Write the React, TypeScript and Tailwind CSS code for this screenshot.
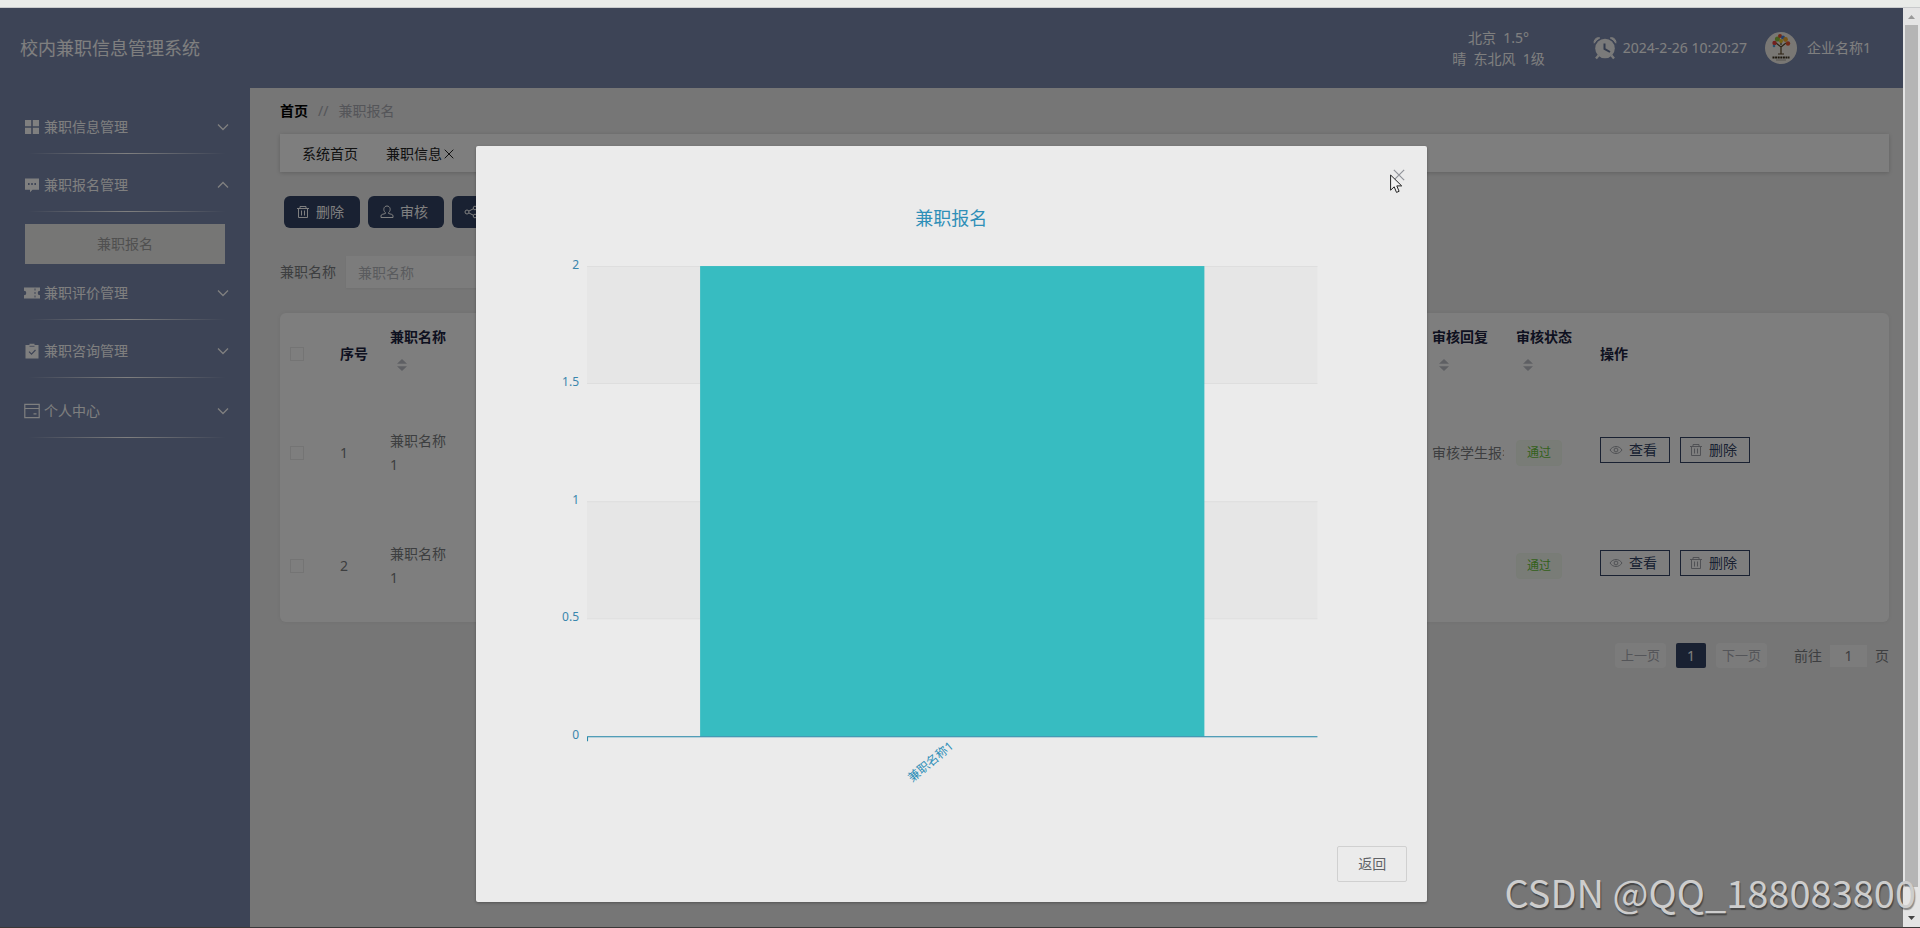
import type { ReactNode } from 'react';

type IconProps = { className?: string };

const TrashIcon = ({ className }: IconProps) => (
  <svg viewBox="0 0 14 14" className={className} fill="none" stroke="currentColor" strokeWidth="1">
    <path d="M1 3.5h12M4 3.2V1.5h6v1.7M2.5 3.5v9h9v-9M5.5 5.5v5M8.5 5.5v5" />
  </svg>
);

const StampIcon = ({ className }: IconProps) => (
  <svg viewBox="0 0 14 14" className={className} fill="none" stroke="currentColor" strokeWidth="1">
    <path d="M5.4 7.6C3.9 6.4 3.7 4.7 3.9 3.6 4.2 2 5.5 1 7 1s2.8 1 3.1 2.6c.2 1.1 0 2.8-1.5 4v.9l3.2.9c.8.2 1.2.8 1.2 1.6v1.5H1V11c0-.8.4-1.4 1.2-1.6l3.2-.9z" />
  </svg>
);

const ShareIcon = ({ className }: IconProps) => (
  <svg viewBox="0 0 14 14" className={className} fill="none" stroke="currentColor" strokeWidth="1">
    <circle cx="3" cy="7" r="2" />
    <circle cx="11" cy="3" r="1.8" />
    <circle cx="11" cy="11" r="1.8" />
    <path d="M4.8 6.1l4.5-2.3M4.8 7.9l4.5 2.3" />
  </svg>
);

const EyeIcon = ({ className }: IconProps) => (
  <svg viewBox="0 0 14 14" className={className} fill="none" stroke="currentColor" strokeWidth="1">
    <path d="M1 7c1.5-2.3 3.6-3.5 6-3.500S11.5 4.7 13 7c-1.5 2.3-3.6 3.5-6 3.500S2.5 9.3 1 7z" />
    <circle cx="7" cy="7" r="1.9" />
  </svg>
);

const CloseIcon = ({ className }: IconProps) => (
  <svg viewBox="0 0 10 10" className={className} fill="none" stroke="currentColor" strokeWidth="1">
    <path d="M.7.7l8.6 8.6M9.3.7L.7 9.3" />
  </svg>
);

const Chevron = ({ className }: IconProps) => (
  <svg viewBox="0 0 12 8" className={className} fill="none" stroke="currentColor" strokeWidth="1.3">
    <path d="M1 1.5l5 5 5-5" />
  </svg>
);

const GridIcon = () => (
  <svg viewBox="0 0 16 16" className="size-4" fill="currentColor">
    <path d="M1 1h6.2v6.2H1zM8.8 1H15v6.2H8.8zM1 8.8h6.2V15H1zM8.8 8.8H15V15H8.8z" />
  </svg>
);

const CommentIcon = () => (
  <svg viewBox="0 0 16 16" className="size-4" fill="currentColor" fillRule="evenodd">
    <path d="M1 1.5h14v11.3H8.5L6 15.2v-2.4H1zM4 6v2h1.600V6zm3.200 0v2h1.600V6zm3.200 0v2H12V6z" />
  </svg>
);

const TicketIcon = () => (
  <svg viewBox="0 0 16 16" className="size-4" fill="currentColor" fillRule="evenodd">
    <path d="M0 2.5h16v3.2a2.3 2.3 0 000 4.6v3.2H0v-3.200a2.3 2.3 0 000-4.600zM10.500 3.500v2h1v-2zm0 3.500v2h1V7zm0 3.500v2h1v-2z" />
  </svg>
);

const ClaimIcon = () => (
  <svg viewBox="0 0 16 16" className="size-4">
    <path d="M1.5 2h4V.8h5V2h4v13.500h-13z" fill="currentColor" />
    <path d="M5 8.700l2.500 2.500 4-4.200" fill="none" stroke="#7a88ac" strokeWidth="1.2" />
    <path d="M5.500 3.300h5" stroke="#7a88ac" strokeWidth=".8" />
  </svg>
);

const CardIcon = () => (
  <svg viewBox="0 0 16 16" className="size-4" fill="none" stroke="currentColor" strokeWidth="1.2">
    <path d="M.8 1.3h14.4v13.4H.8zM.8 5.5h14.4M9.5 10.8h3" />
  </svg>
);

const ClockIcon = () => (
  <svg viewBox="0 0 24 24" className="size-6" fill="#f4f4f4">
    <circle cx="12" cy="12.500" r="9.800" />
    <path d="M1.200 7.200A13 13 0 016.800 1.900L5 1.700A4.500 4.500 0 001.200 7.200zM22.800 7.200A13 13 0 0017.200 1.900l1.800-.2a4.500 4.500 0 013.800 5.500z" stroke="#f4f4f4" />
    <path d="M5.500 19.500L3 22.500M18.500 19.500l2.500 3" stroke="#f4f4f4" strokeWidth="2.400" />
    <path d="M11.500 7.500v5.300l5.500 3.200" fill="none" stroke="#66769a" strokeWidth="2" />
  </svg>
);

const Avatar = () => (
  <svg viewBox="0 0 32 32" className="size-8">
    <circle cx="16" cy="16" r="16" fill="#f2efe9" />
    <path d="M16 22v-7l-5-4M16 15l5-4M16 13V8M13 22h6" fill="none" stroke="#5a4526" strokeWidth="1.2" />
    <circle cx="9.500" cy="11" r="2.200" fill="#e8413c" />
    <circle cx="12.500" cy="7" r="2.600" fill="#8dbf3f" />
    <circle cx="15" cy="4" r="2" fill="#e5532f" />
    <circle cx="18" cy="5.500" r="2" fill="#4b7fd1" />
    <circle cx="20.500" cy="7.500" r="2.400" fill="#f0a92c" />
    <circle cx="16" cy="9" r="2" fill="#e9c52e" />
    <circle cx="23" cy="11.500" r="2.200" fill="#e5532f" />
    <circle cx="9" cy="14" r="1.300" fill="#4f9fd8" />
    <path d="M7.500 25.500h17" stroke="#3a2e1c" strokeWidth="2" strokeDasharray="2 .6" />
    <path d="M11 28h10" stroke="#a09a90" strokeWidth=".8" />
  </svg>
);

const SortCaret = () => (
  <svg viewBox="0 0 12 12" className="ml-1.5 size-3" fill="#bcbfc6">
    <path d="M6 0l5 4.8H1zM6 12l5-4.800H1z" />
  </svg>
);

type MenuItemProps = { icon: ReactNode; label: string; open?: boolean };

function MenuItem({ icon, label, open }: MenuItemProps) {
  return (
    <button
      type="button"
      className="relative flex h-[58px] w-full items-center gap-1 pr-[21px] pl-6 text-sm text-white"
    >
      {icon}
      {label}
      <Chevron className={open ? 'ml-auto h-2 w-3 rotate-180' : 'ml-auto h-2 w-3'} />
      <span className="absolute right-6 bottom-0.5 left-7 h-px bg-linear-to-r from-transparent via-white to-transparent" />
    </button>
  );
}

function Sidebar() {
  return (
    <nav className="w-[250px] shrink-0 bg-[#7a88ac] pt-2.5">
      <MenuItem icon={<GridIcon />} label="兼职信息管理" />
      <MenuItem icon={<CommentIcon />} label="兼职报名管理" open />
      <a href="#signup" className="mx-[25px] mt-2.5 flex h-10 items-center justify-center bg-[#ececea] text-sm text-[#a0a0a0]">
        兼职报名
      </a>
      <MenuItem icon={<TicketIcon />} label="兼职评价管理" />
      <MenuItem icon={<ClaimIcon />} label="兼职咨询管理" />
      <div className="pt-0.5">
        <MenuItem icon={<CardIcon />} label="个人中心" />
      </div>
    </nav>
  );
}

function Header() {
  return (
    <header className="flex h-20 shrink-0 items-center bg-[#7a88ac] pr-8 pl-5 text-sm text-white">
      <h1 className="text-lg">校内兼职信息管理系统</h1>
      <div className="mr-12 ml-auto text-center leading-[21px] whitespace-pre">
        <p>北京{'  '}1.5°</p>
        <p>晴{'  '}东北风{'  '}1级</p>
      </div>
      <ClockIcon />
      <span className="mr-[18px] ml-1.5">2024-2-26 10:20:27</span>
      <Avatar />
      <span className="ml-2.5">企业名称1</span>
    </header>
  );
}

type ToolButtonProps = { icon: ReactNode; label: string };

const ToolButton = ({ icon, label }: ToolButtonProps) => (
  <button type="button" className="flex h-8 w-[76px] items-center gap-1.5 rounded-md bg-[#324264] pl-3 text-sm text-white">
    {icon}
    {label}
  </button>
);

const RowButton = ({ icon, label }: ToolButtonProps) => (
  <button type="button" className="flex h-[26px] w-[70px] items-center gap-1.5 border border-[#324264] pl-2 text-sm text-[#324264]">
    <span className="text-[#a0a3aa]">{icon}</span>
    {label}
  </button>
);

const rows = [
  { id: 1, name: '兼职名称1', reply: '审核学生报名', status: '通过' },
  { id: 2, name: '兼职名称1', reply: '', status: '通过' },
];

const SortableTh = ({ label }: { label: string }) => (
  <th className="pb-3.5 pl-2.5">
    <span className="mb-2.5 block leading-6">{label}</span>
    <SortCaret />
  </th>
);

function SignupTable() {
  return (
    <table className="mt-[25px] w-full table-fixed rounded-md bg-[#fdfdfd] text-left text-sm text-[#7a7c80] shadow-[0_0_4px_rgba(0,0,0,0.06)]">
      <colgroup>
        <col className="w-[50px]" />
        <col className="w-[50px]" />
        <col className="w-[84px]" />
        <col />
        <col className="w-[84px]" />
        <col className="w-[84px]" />
        <col className="w-[299px]" />
      </colgroup>
      <thead>
        <tr className="h-[83px] text-[#1c2340]">
          <th className="pb-0.5 pl-2.5">
            <input type="checkbox" aria-label="全选" className="block size-3.5 appearance-none border border-[#e8e8e8]" />
          </th>
          <th className="pb-0.5 pl-2.5">序号</th>
          <SortableTh label="兼职名称" />
          <th />
          <SortableTh label="审核回复" />
          <SortableTh label="审核状态" />
          <th className="pb-0.5 pl-2.5">操作</th>
        </tr>
      </thead>
      <tbody>
        {rows.map((row) => (
          <tr key={row.id} className="h-[113px]">
            <td className="pl-2.5">
              <input type="checkbox" aria-label={`选择${row.id}`} className="block size-3.5 appearance-none border border-[#e8e8e8]" />
            </td>
            <td className="pl-2.5">{row.id}</td>
            <td className="pr-4 pl-2.5 leading-6 break-all">{row.name}</td>
            <td />
            <td className="pr-0.5 pl-2.5">
              <div className="overflow-hidden whitespace-nowrap">{row.reply}</div>
            </td>
            <td className="pl-2.5">
              <span className="inline-block rounded-sm border border-[#f1f8ec] bg-[#f3f9ef] px-2.5 text-xs leading-6 text-[#67c23a]">{row.status}</span>
            </td>
            <td className="pb-1.5 pl-2.5">
              <div className="flex gap-2.5">
                <RowButton icon={<EyeIcon className="size-3.5" />} label="查看" />
                <RowButton icon={<TrashIcon className="size-3.5" />} label="删除" />
              </div>
            </td>
          </tr>
        ))}
      </tbody>
    </table>
  );
}

function Pagination() {
  return (
    <div className="mt-[21px] flex items-center justify-end text-sm text-[#7a7c80]">
      <button type="button" className="mr-2.5 h-[25px] rounded-sm bg-[#f7f7f7] px-1.5 text-[13px] text-[#a8abb2]">上一页</button>
      <button type="button" className="mr-2.5 h-[25px] w-[30px] rounded-xs bg-[#324264] text-white">1</button>
      <button type="button" className="h-[25px] rounded-sm bg-[#f7f7f7] px-1.5 text-[13px] text-[#a8abb2]">下一页</button>
      <label className="ml-[27px] flex items-center gap-2">
        前往
        <input defaultValue="1" className="h-[22px] w-[37px] bg-[#f9f9f9] text-center" />
        页
      </label>
    </div>
  );
}

function Content() {
  return (
    <main className="min-w-0 flex-1 bg-[#ececec] pr-3.5 pl-[30px]">
      <div className="flex h-[46px] items-center gap-2.5 text-sm text-[#a8abb2]">
        <a href="#home" className="font-bold text-black">首页</a>
        <span>//</span>
        <span>兼职报名</span>
      </div>
      <div className="flex h-[38px] items-center gap-7 bg-[#fdfdfd] pt-0.5 pl-[22px] text-sm text-[#222222] shadow-[0_1px_4px_rgba(0,0,0,0.18)]">
        <a href="#home">系统首页</a>
        <a href="#jobs" className="flex items-center gap-0.5">
          兼职信息
          <CloseIcon className="size-2.5" />
        </a>
      </div>
      <div className="mt-6 flex gap-2 pl-1">
        <ToolButton icon={<TrashIcon className="size-3.5" />} label="删除" />
        <ToolButton icon={<StampIcon className="size-3.5" />} label="审核" />
        <ToolButton icon={<ShareIcon className="size-3.5" />} label="" />
      </div>
      <label className="mt-7 flex items-center gap-2.5 text-sm text-[#7a7c80]">
        兼职名称
        <input placeholder="兼职名称" className="h-8 w-[200px] bg-[#f9f9f9] px-3 shadow-xs placeholder:text-[#b4b7bc]" />
      </label>
      <SignupTable />
      <Pagination />
    </main>
  );
}

const ticks = [
  { label: '2', y: 120 },
  { label: '1.5', y: 237 },
  { label: '1', y: 355 },
  { label: '0.5', y: 472 },
  { label: '0', y: 590 },
];

function SignupChart() {
  return (
    <svg viewBox="0 0 951 690" className="block w-full">
      <text x="475" y="79" fontSize="18" fill="#2f8fb8" textAnchor="middle">兼职报名</text>
      <path d="M111 120h730v117H111zM111 355h730v117H111z" fill="#e6e6e6" />
      {ticks.slice(0, 4).map((tick) => (
        <path key={tick.label} d={`M111 ${tick.y + 0.5}h730`} stroke="#dedede" />
      ))}
      <rect x="224" y="120" width="504" height="470" fill="#37bcc1" />
      <path d="M111.5 595v-4.500H841" fill="none" stroke="#1f84a6" />
      {ticks.map((tick) => (
        <text key={tick.label} x="103" y={tick.y + 3} fontSize="12" fill="#3a86ad" textAnchor="end">{tick.label}</text>
      ))}
      <text fontSize="12" fill="#2f8fb8" textAnchor="end" transform="translate(478 601) rotate(-40)">兼职名称1</text>
    </svg>
  );
}

function ChartDialog() {
  return (
    <div className="absolute inset-0 flex items-start justify-center bg-black/50">
      <div role="dialog" aria-label="兼职报名" className="relative mt-[138px] w-1/2 rounded-xs bg-[#ebebeb] shadow-[0_1px_3px_rgba(0,0,0,0.3)]">
        <button type="button" aria-label="关闭" className="absolute top-[23px] right-[22px] text-[#909399]">
          <CloseIcon className="size-3" />
        </button>
        <svg viewBox="0 0 13 20" className="absolute top-7 right-6 h-5 w-[13px]">
          <path d="M.6 1v15.200l3.600-3.400 2.300 5.600 2.600-1.100-2.300-5.400h4.900z" fill="#f4f4f4" stroke="#222222" />
        </svg>
        <SignupChart />
        <div className="flex justify-end px-5 pt-2.5 pb-5">
          <button type="button" className="h-9 w-[70px] rounded-xs border border-[#d0d0d0] text-sm text-[#606266]">返回</button>
        </div>
      </div>
    </div>
  );
}

function ScrollBar() {
  return (
    <div className="flex w-[17px] shrink-0 flex-col items-center bg-[#e4e4e4]">
      <svg viewBox="0 0 17 17" className="size-[17px]" fill="#999999">
        <path d="M5 11l3.500-4 3.500 4z" />
      </svg>
      <div className="w-[13px] flex-1 bg-[#b5b5b5]" />
      <svg viewBox="0 0 17 17" className="mt-[23px] size-[17px]" fill="#444444">
        <path d="M5 6l3.500 4L12 6z" />
      </svg>
    </div>
  );
}

export default function App() {
  return (
    <div className="relative flex h-screen flex-col overflow-hidden bg-[#e9ebe8] font-['Noto_Sans','Noto_Sans_CJK_SC',sans-serif]">
      <div className="h-2 shrink-0 border-b border-[#c8cacb]" />
      <div className="flex min-h-0 flex-1 border-b border-[#3a3838]">
        <div className="relative flex min-w-0 flex-1 flex-col">
          <Header />
          <div className="flex min-h-0 flex-1">
            <Sidebar />
            <Content />
          </div>
          <ChartDialog />
        </div>
        <ScrollBar />
      </div>
      <p className="pointer-events-none absolute right-1 bottom-2 font-['Noto_Sans_CJK_SC',sans-serif] text-[38px] leading-[56px] text-[#cdcdcd] [text-shadow:1px_2px_1px_rgba(0,0,0,0.4)]">
        CSDN @QQ_188083800
      </p>
    </div>
  );
}
